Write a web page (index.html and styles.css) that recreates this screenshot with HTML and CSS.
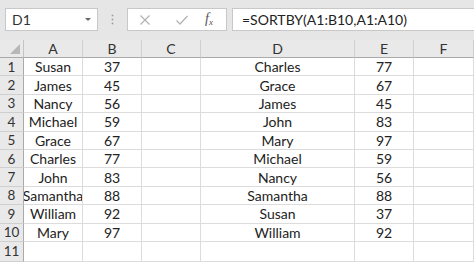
FILE: index.html
```html
<!DOCTYPE html>
<html>
<head>
<meta charset="utf-8">
<link rel="stylesheet" href="styles.css">
</head>
<body>
<div class="toolbar">
  <div class="namebox"><span class="nb-text">D1</span><span class="nb-arrow"></span></div>
  <div class="sep"><span></span><span></span><span></span></div>
  <div class="fbtns">
    <svg class="ic" width="12" height="12" viewBox="0 0 12 12"><path d="M1.5 1.5 L10.5 10.5 M10.5 1.5 L1.5 10.5" stroke="#b4b4b4" stroke-width="1.3" fill="none"/></svg>
    <svg class="ic" width="14" height="12" viewBox="0 0 14 12"><path d="M1.5 6.5 L5 10 L12.5 2" stroke="#b4b4b4" stroke-width="1.3" fill="none"/></svg>
    <span class="fx">f<sub>x</sub></span>
  </div>
  <div class="formula">=SORTBY(A1:B10,A1:A10)</div>
</div>
<div class="sheet">
  <div class="corner"><span class="tri"></span></div>
  <div class="ch">A</div><div class="ch">B</div><div class="ch">C</div><div class="ch">D</div><div class="ch">E</div><div class="ch">F</div>

  <div class="rh">1</div><div class="c">Susan</div><div class="c">37</div><div class="c"></div><div class="c">Charles</div><div class="c">77</div><div class="c"></div>
  <div class="rh">2</div><div class="c">James</div><div class="c">45</div><div class="c"></div><div class="c">Grace</div><div class="c">67</div><div class="c"></div>
  <div class="rh">3</div><div class="c">Nancy</div><div class="c">56</div><div class="c"></div><div class="c">James</div><div class="c">45</div><div class="c"></div>
  <div class="rh">4</div><div class="c">Michael</div><div class="c">59</div><div class="c"></div><div class="c">John</div><div class="c">83</div><div class="c"></div>
  <div class="rh">5</div><div class="c">Grace</div><div class="c">67</div><div class="c"></div><div class="c">Mary</div><div class="c">97</div><div class="c"></div>
  <div class="rh">6</div><div class="c">Charles</div><div class="c">77</div><div class="c"></div><div class="c">Michael</div><div class="c">59</div><div class="c"></div>
  <div class="rh">7</div><div class="c">John</div><div class="c">83</div><div class="c"></div><div class="c">Nancy</div><div class="c">56</div><div class="c"></div>
  <div class="rh">8</div><div class="c">Samantha</div><div class="c">88</div><div class="c"></div><div class="c">Samantha</div><div class="c">88</div><div class="c"></div>
  <div class="rh">9</div><div class="c">William</div><div class="c">92</div><div class="c"></div><div class="c">Susan</div><div class="c">37</div><div class="c"></div>
  <div class="rh">10</div><div class="c">Mary</div><div class="c">97</div><div class="c"></div><div class="c">William</div><div class="c">92</div><div class="c"></div>
  <div class="rh">11</div><div class="c"></div><div class="c"></div><div class="c"></div><div class="c"></div><div class="c"></div><div class="c"></div>
</div>
</body>
</html>
```
FILE: styles.css
```css
html, body {
  margin: 0;
  padding: 0;
  width: 474px;
  height: 262px;
  overflow: hidden;
  background: #e6e6e6;
  font-family: Lato, "Liberation Sans", sans-serif;
}
.toolbar {
  height: 40px;
  box-sizing: border-box;
  padding: 8px 0 0 5px;
  display: flex;
  align-items: flex-start;
  background: #e6e6e6;
}
.namebox {
  width: 93px;
  height: 23px;
  box-sizing: border-box;
  background: #fff;
  border: 1px solid #c8c8c8;
  display: flex;
  align-items: center;
  justify-content: space-between;
  padding: 0 6px 0 6px;
  font-size: 14px;
  color: #333;
}
.nb-arrow {
  width: 0;
  height: 0;
  border-left: 3px solid transparent;
  border-right: 3px solid transparent;
  border-top: 3px solid #666;
}
.sep {
  width: 29px;
  height: 23px;
  display: flex;
  flex-direction: column;
  align-items: center;
  justify-content: center;
  gap: 3px;
}
.sep span {
  width: 1px;
  height: 1px;
  background: #9a9a9a;
  box-shadow: 0 0 0 0.4px #b0b0b0;
}
.fbtns {
  width: 100px;
  height: 23px;
  box-sizing: border-box;
  background: #fff;
  border: 1px solid #c8c8c8;
  display: flex;
  align-items: center;
  padding-left: 11px;
  gap: 0;
}
.fbtns .ic:first-child { margin-right: 24px; }
.fbtns .ic:nth-child(2) { margin-right: 16px; }
.fx {
  font-family: "Liberation Serif", serif;
  font-style: italic;
  font-size: 14px;
  color: #555;
  line-height: 1;
}
.fx sub {
  font-size: 9px;
  vertical-align: -2px;
}
.formula {
  margin-left: 5px;
  flex: 1;
  height: 23px;
  box-sizing: border-box;
  background: #fff;
  border: 1px solid #c8c8c8;
  border-right: none;
  font-size: 14px;
  color: #222;
  padding-left: 9px;
  line-height: 21px;
}
.sheet {
  display: grid;
  grid-template-columns: 24px 59px 59px 59px 154px 59px 1fr;
  grid-template-rows: 18px repeat(10, 18.4px) 20px;
  background: #fff;
}
.sheet > div {
  box-sizing: border-box;
  display: flex;
  align-items: center;
  justify-content: center;
  overflow: hidden;
}
.corner {
  background: #e9e9e9;
  border-right: 1px solid #c4c4c4;
  border-bottom: 1px solid #aaaaaa;
  position: relative;
}
.tri {
  position: absolute;
  right: 3px;
  bottom: 3px;
  width: 0;
  height: 0;
  border-left: 10px solid transparent;
  border-bottom: 10px solid #b7b7b7;
}
.ch {
  background: #e9e9e9;
  border-right: 1px solid #cfcfcf;
  border-bottom: 1px solid #aaaaaa;
  font-size: 14px;
  color: #333;
}
.rh {
  background: #e9e9e9;
  border-right: 1px solid #aaaaaa;
  border-bottom: 1px solid #cfcfcf;
  font-size: 13.5px;
  color: #333;
}
.c {
  background: #fff;
  border-right: 1px solid #dcdcdc;
  border-bottom: 1px solid #dcdcdc;
  font-size: 14px;
  color: #222;
  white-space: nowrap;
}
```
